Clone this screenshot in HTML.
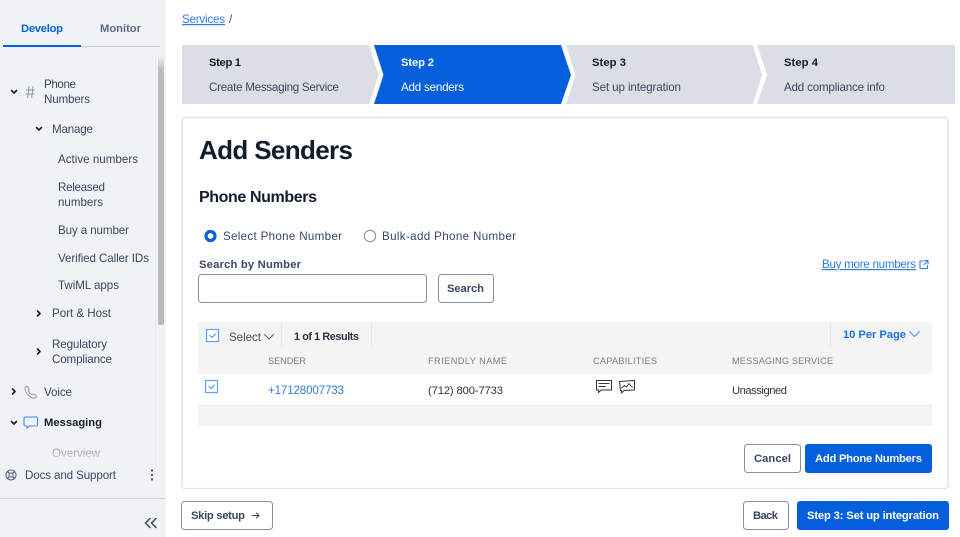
<!DOCTYPE html>
<html lang="en">
<head>
<meta charset="utf-8">
<title>Add Senders</title>
<style>
html,body{margin:0;padding:0;background:#fff;width:960px;height:537px;overflow:hidden}
svg{display:block;position:absolute;left:0;top:0;filter:blur(.3px)}
text{font-family:"Liberation Sans",sans-serif;font-size:11.6px;fill:#394762}
.b{font-weight:700;font-size:11.2px}
.d{fill:#121c2d}
.h{font-size:9.2px;fill:#7d7d7d}
.w{fill:#fff}
.s{fill:none;stroke-linecap:round;stroke-linejoin:round}
</style>
</head>
<body>
<svg width="960" height="537" viewBox="0 0 960 537" xmlns="http://www.w3.org/2000/svg">
<defs>
<linearGradient id="fade" x1="0" y1="0" x2="0" y2="1"><stop offset="0" stop-color="#f1f2f6" stop-opacity="0"/><stop offset="1" stop-color="#f1f2f6"/></linearGradient>
<linearGradient id="sb" x1="0" y1="0" x2="0" y2="1"><stop offset="0" stop-color="#f1f2f6"/><stop offset="1" stop-color="#b9b9bb"/></linearGradient>
</defs>

<!-- Sidebar -->
<rect x="0" y="0" width="166" height="537" fill="#f1f2f6"/>
<rect x="3" y="45" width="78" height="2" fill="#0263e0"/>
<rect x="81" y="46" width="79" height="1" fill="#cacdd8"/>
<text x="21" y="32" class="b" style="fill:#0263e0" textLength="42">Develop</text>
<text x="100" y="32" class="b" style="fill:#606b85" textLength="41">Monitor</text>
<rect x="155" y="55" width="1" height="410" fill="#e9eaef"/>
<rect x="158" y="55" width="6" height="16" fill="url(#sb)"/>
<rect x="158" y="71" width="6" height="254" rx="2" fill="#b9b9bb"/>

<path class="s" d="M11.500 90.500l2.500 2.500 2.500-2.500" stroke="#121c2d" stroke-width="1.600"/>
<path class="s" d="M29 86.500l-1.300 11M33 86.500l-1.300 11M26.500 90h8M26 94h8" stroke="#8891aa" stroke-width=".9"/>
<text x="44" y="88" textLength="32">Phone</text>
<text x="44" y="103" textLength="46">Numbers</text>
<path class="s" d="M36.500 127.500l2.500 2.500 2.500-2.500" stroke="#121c2d" stroke-width="1.600"/>
<text x="52" y="133" textLength="41">Manage</text>
<text x="58" y="163" textLength="80">Active numbers</text>
<text x="58" y="191" textLength="47">Released</text>
<text x="58" y="206" textLength="45">numbers</text>
<text x="58" y="234" textLength="71">Buy a number</text>
<text x="58" y="262" textLength="91">Verified Caller IDs</text>
<text x="58" y="289" textLength="61">TwiML apps</text>
<path class="s" d="M37.500 311l2.500 2.500-2.500 2.500" stroke="#121c2d" stroke-width="1.600"/>
<text x="52" y="317" textLength="59">Port &amp; Host</text>
<path class="s" d="M37.500 349l2.500 2.500-2.500 2.500" stroke="#121c2d" stroke-width="1.600"/>
<text x="52" y="348" textLength="55">Regulatory</text>
<text x="52" y="363" textLength="60">Compliance</text>
<path class="s" d="M12.500 389l2.500 2.500-2.500 2.500" stroke="#121c2d" stroke-width="1.600"/>
<path class="s" d="M25.500 387c1-1 2-1 2.500 0l1 2c.3.700 0 1.200-.7 1.700.7 1.800 2 3.100 3.800 4 .6-.7 1.100-1 1.800-.6l1.900 1.100c.8.500.8 1.500 0 2.300-1 1-2.300 1-4 .2-2.800-1.300-5-3.500-6.300-6.500-.6-1.600-.7-3 0-4.200z" stroke="#8891aa" stroke-width=".9"/>
<text x="44" y="396" textLength="28">Voice</text>
<path class="s" d="M11.500 421.500l2.500 2.500 2.500-2.500" stroke="#121c2d" stroke-width="1.600"/>
<path class="s" d="M25.500 417h10.500a1.500 1.500 0 0 1 1.500 1.500v6a1.500 1.500 0 0 1-1.500 1.500h-6.500l-2.500 2.200v-2.200h-1.500a1.500 1.500 0 0 1-1.500-1.500v-6a1.500 1.500 0 0 1 1.500-1.500z" stroke="#3f8cf0" stroke-width="1.100"/>
<text x="44" y="426" class="b d" textLength="58">Messaging</text>
<text x="52" y="457" style="fill:#a3a7b2" textLength="48">Overview</text>
<rect x="0" y="452" width="155" height="10" fill="url(#fade)"/>
<circle cx="11" cy="475" r="5" class="s" stroke="#606b85" stroke-width="1.100"/>
<circle cx="11" cy="475" r="2" class="s" stroke="#606b85" stroke-width="1"/>
<path class="s" d="M7.500 471.500l2 2M14.500 471.500l-2 2M7.500 478.500l2-2M14.500 478.500l-2-2" stroke="#606b85" stroke-width="1.300"/>
<text x="25" y="479" textLength="91">Docs and Support</text>
<circle cx="152" cy="470.500" r="1.100" fill="#394762"/><circle cx="152" cy="475" r="1.100" fill="#394762"/><circle cx="152" cy="479.500" r="1.100" fill="#394762"/>
<rect x="0" y="498" width="166" height="1" fill="#d5d8e1"/>
<path class="s" d="M150 518.500l-4.500 4.500 4.500 4.500M156 518.500l-4.500 4.500 4.500 4.500" stroke="#394762" stroke-width="1.500"/>

<!-- Breadcrumb -->
<text x="182" y="23" style="fill:#2f7de1;text-decoration:underline" textLength="43">Services</text>
<text x="229" y="23" textLength="4">/</text>

<!-- Steps -->
<polygon points="182,45 369,45 378.500,75 369,104 182,104" fill="#dcdee5"/>
<polygon points="374,45 561,45 571,75 561,104 374,104 383.500,75" fill="#035fdc"/>
<polygon points="566,45 753,45 762,75 753,104 566,104 575.500,75" fill="#dcdee5"/>
<polygon points="757,45 955,45 955,104 757,104 767,75" fill="#dcdee5"/>
<text x="209" y="66" class="b d" textLength="32">Step 1</text>
<text x="209" y="91" textLength="130">Create Messaging Service</text>
<text x="401" y="66" class="b w" textLength="33">Step 2</text>
<text x="401" y="91" class="w" textLength="63">Add senders</text>
<text x="592" y="66" class="b d" textLength="34">Step 3</text>
<text x="592" y="91" textLength="89">Set up integration</text>
<text x="784" y="66" class="b d" textLength="34">Step 4</text>
<text x="784" y="91" textLength="101">Add compliance info</text>

<!-- Card -->
<rect x="182" y="117.500" width="766" height="371" rx="3" fill="#fff" stroke="#e1e3ea" stroke-width="1.500"/>
<text x="199" y="159" class="b d" style="font-size:26px" textLength="154">Add Senders</text>
<text x="199" y="202" class="b d" style="font-size:16px" textLength="118">Phone Numbers</text>

<circle cx="210.500" cy="236" r="4.500" fill="#fff" stroke="#035fdc" stroke-width="3.200"/>
<text x="223" y="240" textLength="119">Select Phone Number</text>
<circle cx="370" cy="236" r="5.700" fill="#fff" stroke="#8891aa" stroke-width="1.100"/>
<text x="382" y="240" textLength="134">Bulk-add Phone Number</text>
<text x="199" y="268" class="b" textLength="102">Search by Number</text>
<rect x="198.500" y="274.500" width="228" height="28" rx="3" fill="#fff" stroke="#8891aa"/>
<rect x="438.500" y="274.500" width="55" height="28" rx="3" fill="#fff" stroke="#8891aa"/>
<text x="447" y="292" class="b" textLength="37">Search</text>
<text x="822" y="268" style="fill:#2f7de1;text-decoration:underline" textLength="94">Buy more numbers</text>
<path class="s" d="M923 261h-3v7.500h7.500v-3M924.500 260.500h3.500v3.500M928 260.500l-4 4" stroke="#2f7de1" stroke-width="1.100"/>

<!-- Table -->
<rect x="198" y="322" width="734" height="52" fill="#f4f4f4"/>
<rect x="198" y="374" width="734" height="31" fill="#fff"/>
<rect x="198" y="405" width="734" height="21" fill="#f4f4f4"/>
<rect x="198" y="405" width="734" height="1" fill="#ececec"/>
<rect x="206.500" y="329.500" width="12" height="12" fill="#fff" stroke="#5ba3f0" stroke-width="1.200"/>
<path class="s" d="M210 335.500l2 2 3.500-3.500" stroke="#3f8cf0" stroke-width="1"/>
<text x="229" y="341" style="fill:#4f4f4f" textLength="32">Select</text>
<path class="s" d="M264.500 334.500l4.500 4.500 4.500-4.500" stroke="#555" stroke-width=".9"/>
<rect x="281" y="322" width="1" height="26" fill="#e8e8e8"/>
<text x="294" y="340" class="b" style="font-size:10.800px;fill:#2b3346" textLength="65">1 of 1 Results</text>
<rect x="371" y="322" width="1" height="26" fill="#e8e8e8"/>
<rect x="830" y="322" width="1" height="26" fill="#e8e8e8"/>
<text x="843" y="338" class="b" style="fill:#1c6fe0" textLength="63">10 Per Page</text>
<path class="s" d="M909.500 331.500l5 5 5-5" stroke="#3f8cf0" stroke-width=".9"/>
<text x="268" y="364" class="h" textLength="38">SENDER</text>
<text x="428" y="364" class="h" textLength="79">FRIENDLY NAME</text>
<text x="593" y="364" class="h" textLength="64">CAPABILITIES</text>
<text x="732" y="364" class="h" textLength="101">MESSAGING SERVICE</text>
<rect x="205.500" y="380.500" width="12" height="12" fill="#fff" stroke="#5ba3f0" stroke-width="1.200"/>
<path class="s" d="M209 386.500l2 2 3.500-3.500" stroke="#3f8cf0" stroke-width="1"/>
<text x="268" y="394" style="fill:#2f7fd6" textLength="76">+17128007733</text>
<text x="428" y="394" style="font-size:11.200px;fill:#333" textLength="75">(712) 800-7733</text>
<text x="732" y="394" style="font-size:11.200px;fill:#333" textLength="55">Unassigned</text>
<path class="s" d="M596.500 380.500h15v9.500h-10.500l-2.500 2.500v-2.500h-2z" stroke="#333" stroke-width="1"/>
<path class="s" d="M599 383.500h10M599 386.500h6.500" stroke="#333" stroke-width=".9"/>
<path class="s" d="M619.500 381.500l15-1v9.500l-10.500.500-2.500 2.500v-2.500h-1z" stroke="#333" stroke-width="1"/>
<path class="s" d="M621.500 388l3-2.500 2 1.500 2.500-3.500 3.500 4" stroke="#333" stroke-width=".9"/>

<!-- Card actions -->
<rect x="744.500" y="444.500" width="56" height="28" rx="3" fill="#fff" stroke="#8891aa"/>
<text x="754" y="462" class="b" textLength="37">Cancel</text>
<rect x="805" y="444" width="127" height="29" rx="3" fill="#035fdc"/>
<text x="815" y="462" class="b w" textLength="107">Add Phone Numbers</text>

<!-- Footer actions -->
<rect x="181.500" y="501.500" width="91" height="28" rx="3" fill="#fff" stroke="#8891aa"/>
<text x="191" y="519" class="b" textLength="54">Skip setup</text>
<path class="s" d="M252 515.500h7M256.500 513l2.500 2.500-2.500 2.500" stroke="#394762" stroke-width="1"/>
<rect x="743.500" y="501.500" width="45" height="28" rx="3" fill="#fff" stroke="#8891aa"/>
<text x="753" y="519" class="b" textLength="25">Back</text>
<rect x="797" y="501" width="152" height="29" rx="3" fill="#035fdc"/>
<text x="807" y="519" class="b w" textLength="132">Step 3: Set up integration</text>
</svg>
</body>
</html>
